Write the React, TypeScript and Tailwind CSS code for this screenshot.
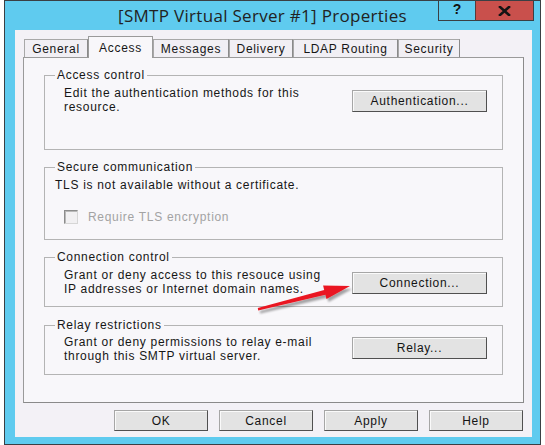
import React from "react";

const btn =
  "flex items-center justify-center border border-t-[#a6a6a6] border-l-[#a6a6a6] border-r-[#505050] border-b-[#505050] bg-[#e3e3e3] text-[#141414] shadow-[inset_1px_1px_0_#fafafa]";

function Tab({ label, w, active }: { label: string; w: string; active?: boolean }) {
  if (active) {
    return (
      <div
        className={`${w} h-[22px] -mb-px flex items-start justify-center pt-[2px] bg-[#f8f7fa] border border-b-0 border-[#9a9a9a] z-10`}
      >
        {label}
      </div>
    );
  }
  return (
    <div
      className={`${w} h-[18px] flex items-center justify-center bg-[#f1eff4] border border-b-0 border-l-[#a8a8a8] border-t-[#a8a8a8] border-r-[#8a8a8a]`}
    >
      {label}
    </div>
  );
}

function Group({
  title,
  h,
  mt,
  children,
}: {
  title: string;
  h: string;
  mt: string;
  children: React.ReactNode;
}) {
  return (
    <fieldset className={`${h} ${mt} border border-[#b4b4b4] mx-[20px] min-w-0`}>
      <legend className="ml-[10px] px-[2px] leading-[14px]">{title}</legend>
      {children}
    </fieldset>
  );
}

export default function App() {
  return (
    <div className="relative w-[545px] h-[445px] bg-white overflow-hidden font-['Liberation_Sans',Arial,sans-serif] text-[12px] tracking-[0.7px] text-[#161616]">
      {/* window frame */}
      <div className="ml-[4px] w-[537px] h-[445px] border border-[#3a3f44] bg-[#5fcbef] flex flex-col">
        {/* title bar */}
        <div className="h-[29px] flex items-start">
          <div className="flex-1 h-[29px] flex items-center justify-center pl-[82px] font-['Open_Sans',sans-serif] text-[17px] text-[#222] tracking-[0.3px]">
            [SMTP Virtual Server #1] Properties
          </div>
          <div className="-mt-px mr-[6px] flex">
            <div className="w-[37px] h-[21px] border border-[#3a3f44] border-r-0 flex items-center justify-center font-['Liberation_Sans',sans-serif] font-bold text-[14px] tracking-normal text-[#111] pb-[2px]">
              ?
            </div>
            <div className="w-[59px] h-[21px] bg-[#c9504c] border border-[#3a3f44] border-l-[#5a3a3a] flex items-center justify-center">
              <svg width="13" height="10" viewBox="0 0 13 10">
                <path d="M2 1 L11 9 M11 1 L2 9" stroke="#141414" strokeWidth="2.6" strokeLinecap="square" />
              </svg>
            </div>
          </div>
        </div>

        {/* client area */}
        <div className="ml-[10px] mr-[8px] h-[407px] bg-[#f3f1f6] px-[8px] pt-[6px] flex flex-col">
          {/* tabs */}
          <div className="flex items-end pl-[1px] h-[21px]">
            <Tab label="General" w="w-[64px]" />
            <Tab label="Access" w="w-[65px]" active />
            <Tab label="Messages" w="w-[76px]" />
            <Tab label="Delivery" w="w-[64px]" />
            <Tab label="LDAP Routing" w="w-[105px]" />
            <Tab label="Security" w="w-[62px]" />
          </div>

          {/* tab page */}
          <div className="h-[346px] bg-[#f8f7fa] border border-t-[#9a9a9a] border-l-[#9a9a9a] border-r-[#8a8a8a] border-b-[#8a8a8a] flex flex-col">
            <Group title="Access control" h="h-[82px]" mt="mt-[10px]">
              <div className="flex items-start justify-between pl-[19px] pr-[15px] pt-[4px] leading-[14px]">
                <div>
                  Edit the authentication methods for this
                  <br />
                  resource.
                </div>
                <div className={`${btn} w-[135px] h-[22px] mt-[4px]`}>Authentication...</div>
              </div>
            </Group>

            <Group title="Secure communication" h="h-[80px]" mt="mt-[10px]">
              <div className="pl-[10px] pt-[4px] leading-[14px]">
                TLS is not available without a certificate.
              </div>
              <div className="ml-[19px] mt-[16px] flex items-center gap-[10px] text-[#a3a3a3]">
                <div className="w-[14px] h-[14px] border border-t-[#8c8c8c] border-l-[#8c8c8c] border-r-[#d6d6d6] border-b-[#d6d6d6] bg-[#f1f0f2] shadow-[inset_1px_1px_0_#b9b9b9]" />
                <span>Require TLS encryption</span>
              </div>
            </Group>

            <Group title="Connection control" h="h-[57px]" mt="mt-[10px]">
              <div className="flex items-start justify-between pl-[19px] pr-[15px] pt-[4px] leading-[14px]">
                <div>
                  Grant or deny access to this resouce using
                  <br />
                  IP addresses or Internet domain names.
                </div>
                <div className={`${btn} w-[135px] h-[22px] mt-[4px]`}>Connection...</div>
              </div>
            </Group>

            <Group title="Relay restrictions" h="h-[57px]" mt="mt-[11px]">
              <div className="flex items-start justify-between pl-[19px] pr-[15px] pt-[3px] leading-[14px]">
                <div>
                  Grant or deny permissions to relay e-mail
                  <br />
                  through this SMTP virtual server.
                </div>
                <div className={`${btn} w-[135px] h-[22px] mt-[2px]`}>Relay...</div>
              </div>
            </Group>
          </div>

          {/* dialog buttons */}
          <div className="mt-[7px] flex justify-end gap-[11px] pr-[1px]">
            <div className={`${btn} w-[94px] h-[21px]`}>OK</div>
            <div className={`${btn} w-[94px] h-[21px]`}>Cancel</div>
            <div className={`${btn} w-[94px] h-[21px]`}>Apply</div>
            <div className={`${btn} w-[94px] h-[21px]`}>Help</div>
          </div>
        </div>
      </div>

      {/* red callout arrow */}
      <svg className="absolute left-0 top-0 pointer-events-none" width="545" height="445" viewBox="0 0 545 445">
        <defs>
          <filter id="arrowShadow" x="-20%" y="-50%" width="140%" height="200%">
            <feGaussianBlur in="SourceAlpha" stdDeviation="1.2" />
            <feOffset dx="2" dy="3" result="b" />
            <feComponentTransfer>
              <feFuncA type="linear" slope="0.35" />
            </feComponentTransfer>
            <feMerge>
              <feMergeNode />
              <feMergeNode in="SourceGraphic" />
            </feMerge>
          </filter>
        </defs>
        <polygon
          points="257.8,308 324.2,289.9 323.1,285.5 350,286 326.5,299.1 325.4,294.7 258.2,310.5"
          fill="#ea1620"
          filter="url(#arrowShadow)"
        />
      </svg>
    </div>
  );
}
